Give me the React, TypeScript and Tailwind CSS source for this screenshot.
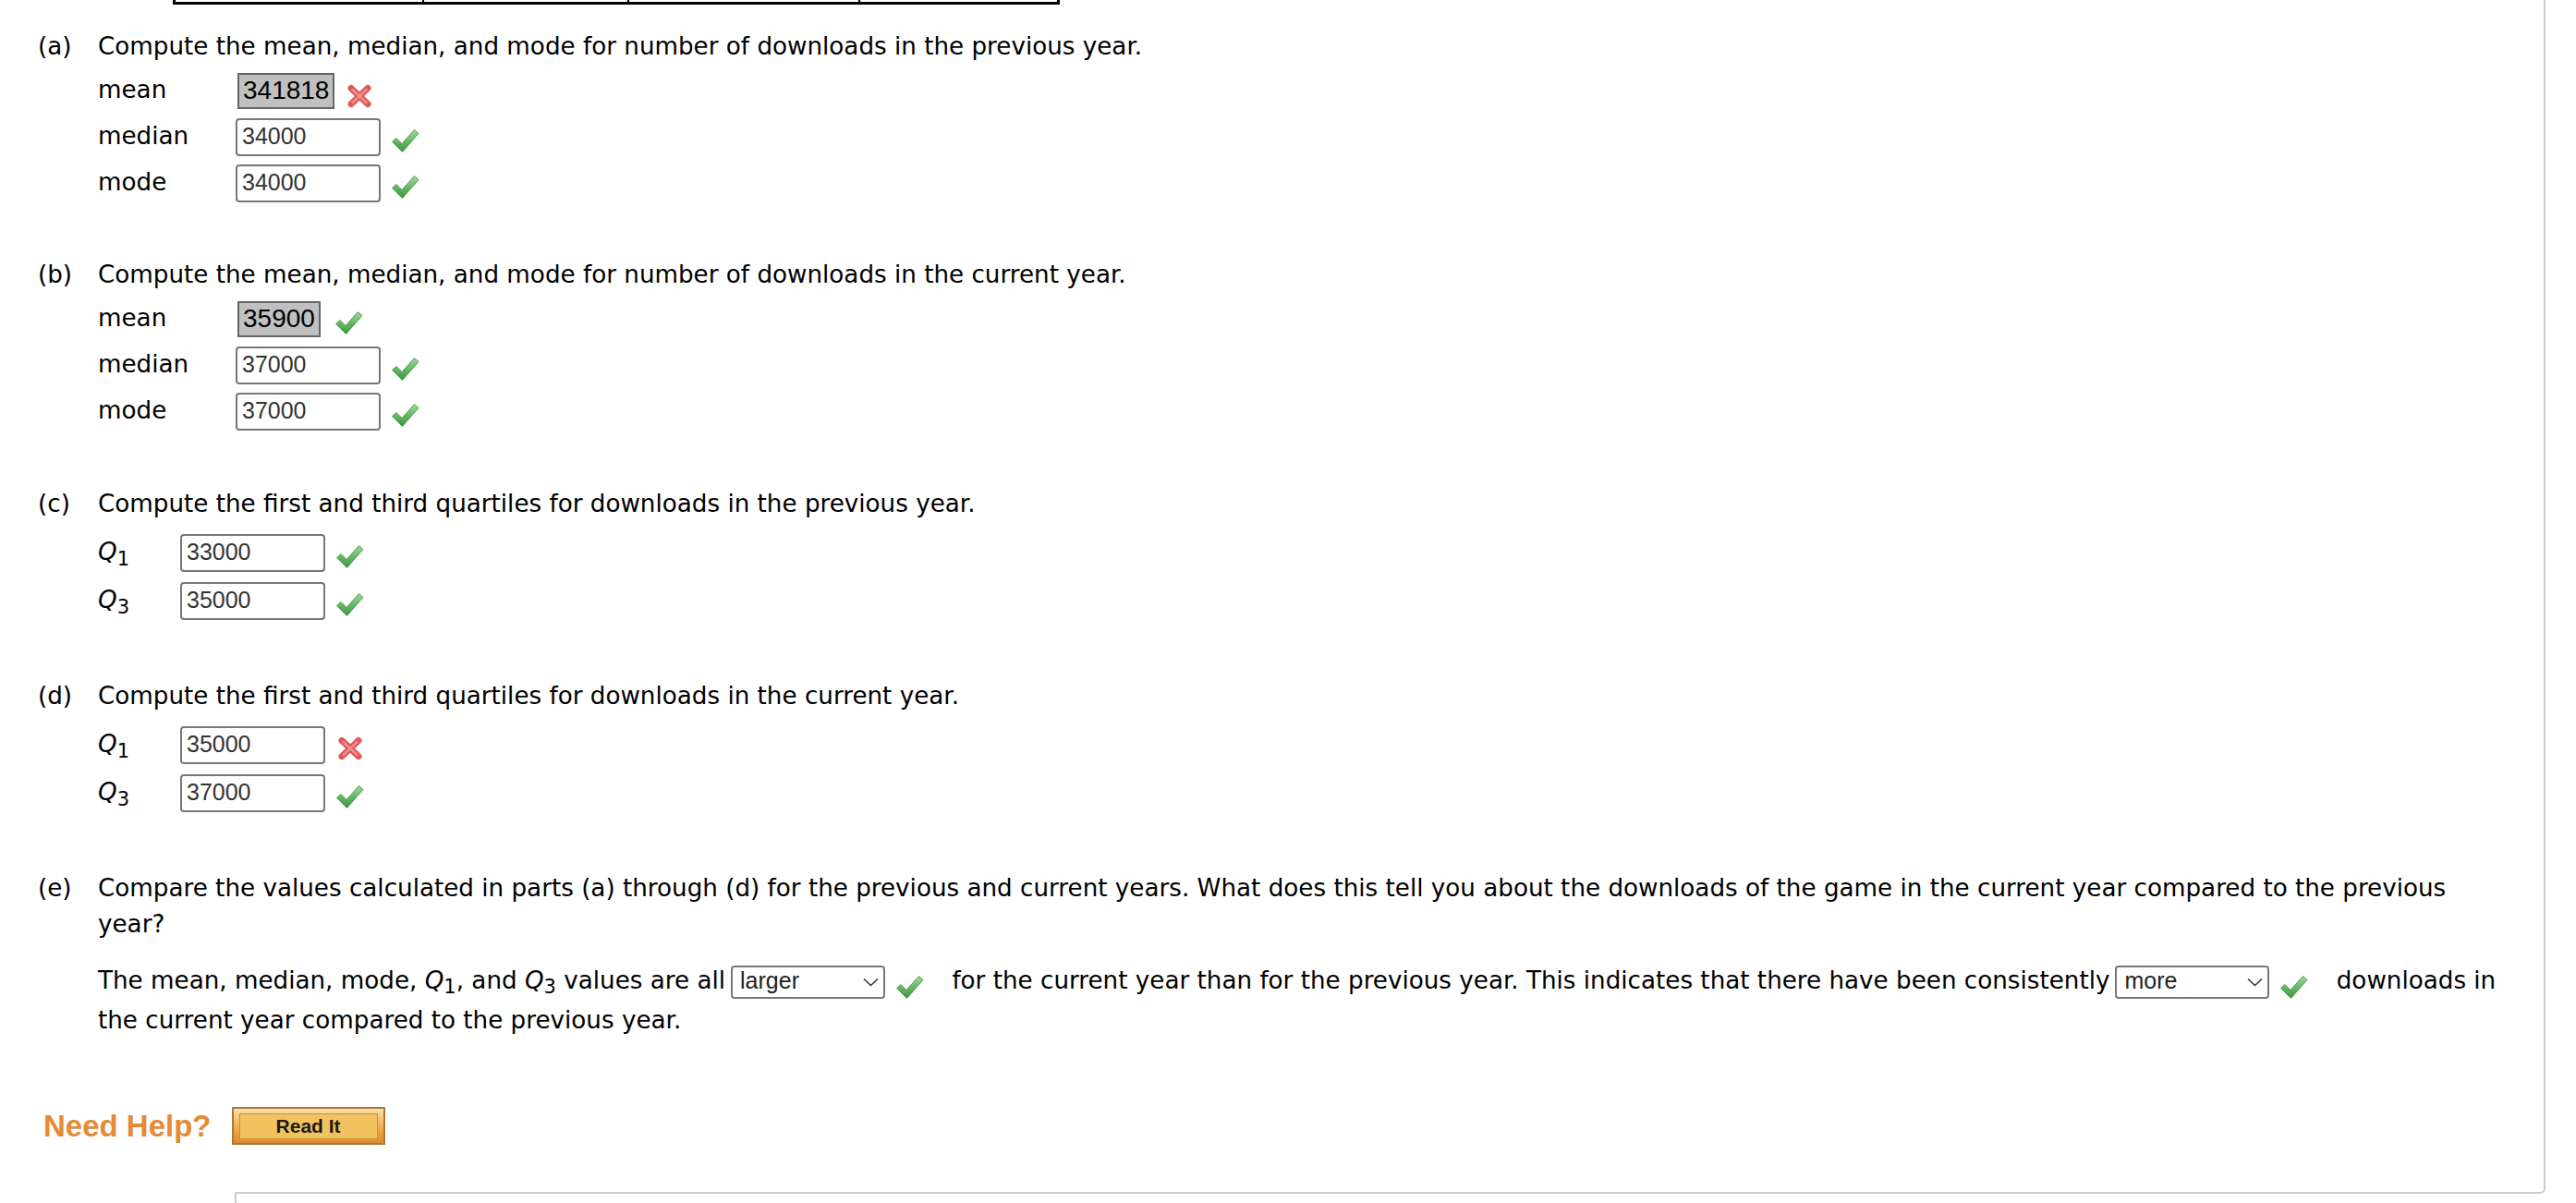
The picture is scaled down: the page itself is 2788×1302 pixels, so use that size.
import React from 'react';

const CheckMark = ({ className = '' }: { className?: string }) => (
  <svg width="31" height="28" viewBox="0 0 31 28" className={className}>
    <defs>
      <linearGradient id="chk" x1="0" y1="0" x2="0" y2="1">
        <stop offset="0" stopColor="#a3d9a3" />
        <stop offset="0.55" stopColor="#62b462" />
        <stop offset="1" stopColor="#3c963c" />
      </linearGradient>
    </defs>
    <path
      d="M1.5 15.5 L6 11.5 L12 17.5 L25.5 2.5 L30 6.5 L12.5 26.5 Z"
      fill="url(#chk)"
      stroke="#4f9f4f"
      strokeWidth="1"
      strokeLinejoin="round"
    />
  </svg>
);

const CrossMark = ({ className = '' }: { className?: string }) => (
  <svg width="28" height="26" viewBox="0 0 28 26" className={className}>
    <g stroke="#e05757" strokeWidth="7" strokeLinecap="round">
      <path d="M5 4.5 L23 21.5" />
      <path d="M23 4.5 L5 21.5" />
    </g>
    <g stroke="#f08c8c" strokeWidth="2.5" strokeLinecap="round">
      <path d="M6.5 6 L21.5 20" />
      <path d="M21.5 6 L6.5 20" />
    </g>
  </svg>
);

const Chevron = () => (
  <svg width="17" height="10" viewBox="0 0 17 10">
    <polyline points="1,1.5 8.5,8.5 16,1.5" fill="none" stroke="#333" strokeWidth="1.6" />
  </svg>
);

// grey box holding a submitted answer (mean rows)
const Answer = ({ value }: { value: string }) => (
  <div className="flex h-[39px] items-center border-2 border-[#666666] bg-[#c0c0c0] px-[4px] font-['Liberation_Sans',Arial,sans-serif] text-[28px] text-black">
    {value}
  </div>
);

const Field = ({ value }: { value: string }) => (
  <div className="flex h-[41px] w-[157px] items-center rounded-[4px] border-2 border-[#777777] pl-[5px] font-['Liberation_Sans',Arial,sans-serif] text-[25px] text-[#333333]">
    {value}
  </div>
);

const Dropdown = ({ value }: { value: string }) => (
  <span className="ml-[6px] inline-flex h-[36px] w-[167px] items-center justify-between rounded-[4px] border-2 border-[#777777] pl-[8px] pr-[5px] align-middle font-['Liberation_Sans',Arial,sans-serif] text-[25px] leading-none text-[#222222]">
    <span className="-mt-[2px]">{value}</span>
    <Chevron />
  </span>
);

const Q = ({ n }: { n: number }) => (
  <span className="whitespace-nowrap">
    <i>Q</i>
    <sub className="text-[21px] leading-none">{n}</sub>
  </span>
);

interface RowProps {
  label: React.ReactNode;
  labelWidth: string;
  height: string;
  children: React.ReactNode;
}

const Row: React.FC<RowProps> = ({ label, labelWidth, height, children }) => (
  <div className={`flex items-center ${height}`}>
    <div className={`shrink-0 ${labelWidth}`}>{label}</div>
    {children}
  </div>
);

interface PartProps {
  letter: string;
  title: string;
  className: string;
  children: React.ReactNode;
}

const Part: React.FC<PartProps> = ({ letter, title, className, children }) => (
  <section className={`flex ${className}`}>
    <div className="w-[65px] shrink-0 leading-[40px]">({letter})</div>
    <div>
      <div className="whitespace-nowrap leading-[40px]">{title}</div>
      {children}
    </div>
  </section>
);

export default function App() {
  return (
    <div className="min-h-screen bg-white font-['DejaVu_Sans',Verdana,sans-serif] text-[26.2px] text-black">
      <div className="w-[2755px] border-r-2 border-[#cccccc] pb-[41px] pl-[41px]">
        {/* bottom edge of the data table above */}
        <div className="ml-[146px] flex h-[5px] w-[960px] border-x-[3px] border-b-[3px] border-black">
          <div className="w-[267px]" />
          <div className="w-[222px] border-l-2 border-black" />
          <div className="w-[250px] border-l-2 border-black" />
          <div className="flex-1 border-l-2 border-black" />
        </div>

        <Part letter="a" title="Compute the mean, median, and mode for number of downloads in the previous year." className="mt-[25px]">
          <div className="mt-[3px]">
            <Row label="mean" labelWidth="w-[151px]" height="h-[50px]">
              <Answer value="341818" />
              <CrossMark className="ml-[13px] mt-[12px]" />
            </Row>
            <Row label="median" labelWidth="w-[149px]" height="h-[50px]">
              <Field value="34000" />
              <CheckMark className="ml-[11px] mt-[8px]" />
            </Row>
            <Row label="mode" labelWidth="w-[149px]" height="h-[50px]">
              <Field value="34000" />
              <CheckMark className="ml-[11px] mt-[8px]" />
            </Row>
          </div>
        </Part>

        <Part letter="b" title="Compute the mean, median, and mode for number of downloads in the current year." className="mt-[54px]">
          <div className="mt-[3px]">
            <Row label="mean" labelWidth="w-[151px]" height="h-[50px]">
              <Answer value="35900" />
              <CheckMark className="ml-[15px] mt-[8px]" />
            </Row>
            <Row label="median" labelWidth="w-[149px]" height="h-[50px]">
              <Field value="37000" />
              <CheckMark className="ml-[11px] mt-[8px]" />
            </Row>
            <Row label="mode" labelWidth="w-[149px]" height="h-[50px]">
              <Field value="37000" />
              <CheckMark className="ml-[11px] mt-[8px]" />
            </Row>
          </div>
        </Part>

        <Part letter="c" title="Compute the first and third quartiles for downloads in the previous year." className="mt-[55px]">
          <div className="mt-[7px]">
            <Row label={<Q n={1} />} labelWidth="w-[89px]" height="h-[52px]">
              <Field value="33000" />
              <CheckMark className="ml-[11px] mt-[8px]" />
            </Row>
            <Row label={<Q n={3} />} labelWidth="w-[89px]" height="h-[52px]">
              <Field value="35000" />
              <CheckMark className="ml-[11px] mt-[8px]" />
            </Row>
          </div>
        </Part>

        <Part letter="d" title="Compute the first and third quartiles for downloads in the current year." className="mt-[57px]">
          <div className="mt-[7px]">
            <Row label={<Q n={1} />} labelWidth="w-[89px]" height="h-[52px]">
              <Field value="35000" />
              <CrossMark className="ml-[13px] mt-[8px]" />
            </Row>
            <Row label={<Q n={3} />} labelWidth="w-[89px]" height="h-[52px]">
              <Field value="37000" />
              <CheckMark className="ml-[11px] mt-[8px]" />
            </Row>
          </div>
        </Part>

        <section className="mt-[58px] flex">
          <div className="w-[65px] shrink-0 leading-[39px]">(e)</div>
          <div className="whitespace-nowrap">
            <p className="leading-[39px]">
              Compare the values calculated in parts (a) through (d) for the previous and current years. What does this tell you about the downloads of the game in the current year compared to the previous
              <br />
              year?
            </p>
            <p className="mt-[20px] leading-[43px]">
              The mean, median, mode, <Q n={1} />, and <Q n={3} /> values are all
              <Dropdown value="larger" />
              <CheckMark className="ml-[11px] mr-[22px] inline align-[-12px]" />
              {' '}for the current year than for the previous year. This indicates that there have been consistently
              <Dropdown value="more" />
              <CheckMark className="ml-[11px] mr-[22px] inline align-[-12px]" />
              {' '}downloads in
              <br />
              the current year compared to the previous year.
            </p>
          </div>
        </section>

        <div className="ml-[6px] mt-[72px] flex h-[41px] items-center">
          <span className="font-['Liberation_Sans',Arial,sans-serif] text-[33px] font-bold text-[#e68a35]">Need Help?</span>
          <div className="ml-[22px] h-[41px] w-[166px] border-2 border-[#a8773a] bg-linear-to-b from-[#fbe0ad] via-[#efb151] to-[#e28a31] px-[6px] pb-[4px] pt-[5px]">
            <div className="flex h-full items-center justify-center border border-[#c4913f] bg-[#f3c25e] font-['Liberation_Sans',Arial,sans-serif] text-[21px] font-bold text-[#1a1a1a]">
              Read It
            </div>
          </div>
        </div>
      </div>
      <div className="ml-[254px] h-[12px] w-[2501px] rounded-br-[6px] border-b-2 border-r-2 border-[#cccccc]" />
      <div className="ml-[254px] h-[10px] border-l-2 border-[#cccccc]" />
    </div>
  );
}
